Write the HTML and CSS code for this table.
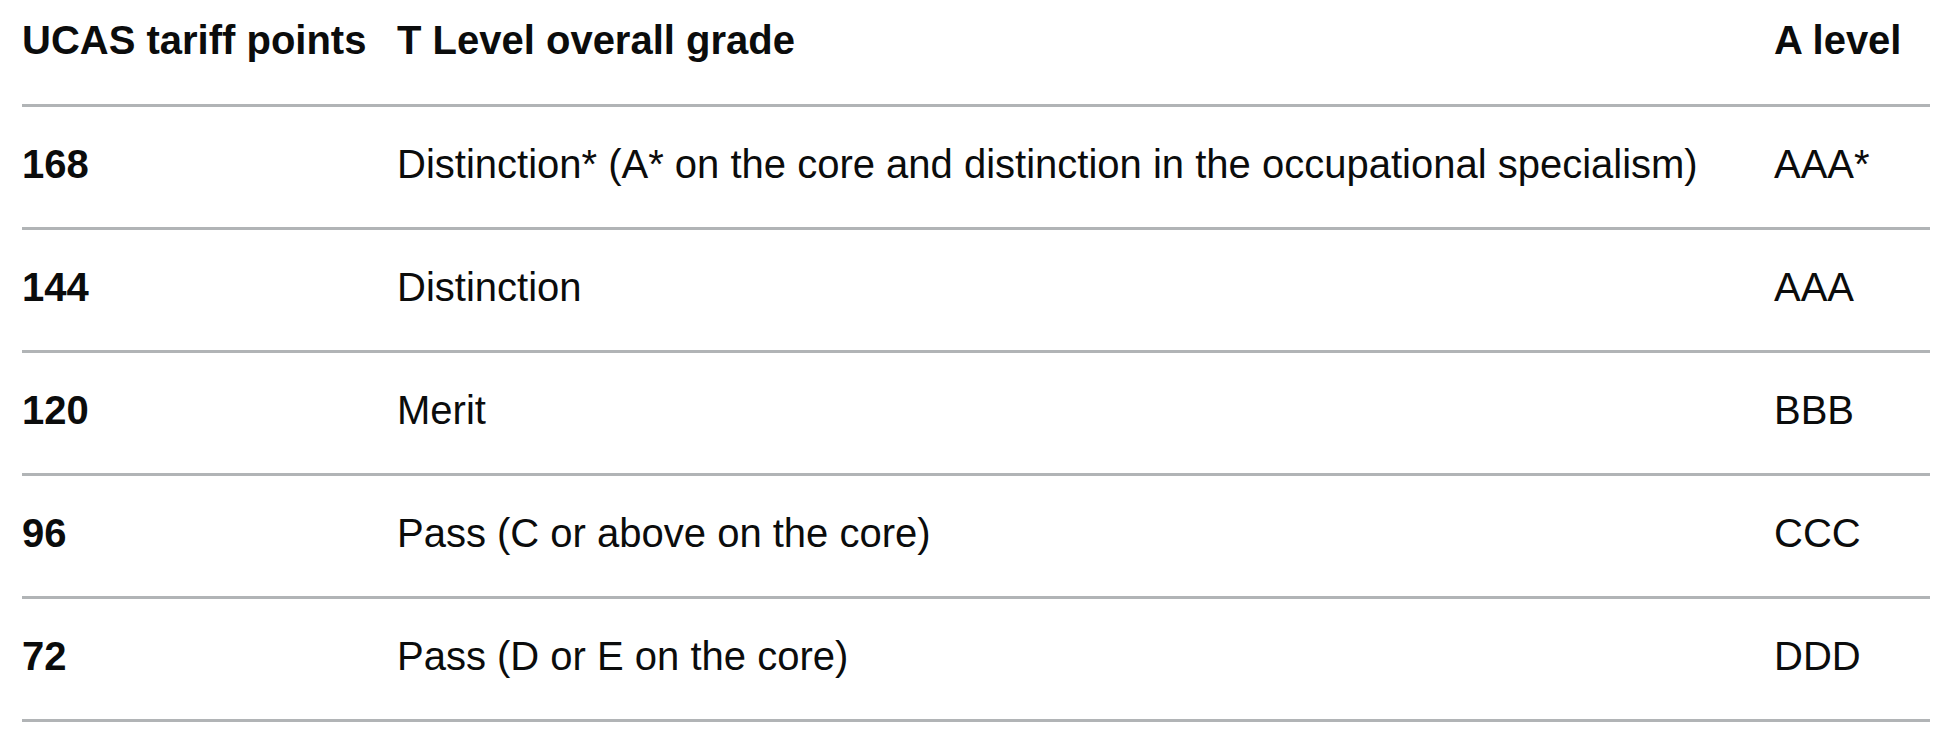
FILE: index.html
```html
<!DOCTYPE html>
<html lang="en">
<head>
<meta charset="utf-8">
<title>T Level UCAS tariff points</title>
<link rel="stylesheet" href="styles.css">
</head>
<body>
<table class="table">
  <colgroup>
    <col class="col-points">
    <col class="col-grade">
    <col class="col-alevel">
  </colgroup>
  <thead>
    <tr>
      <th class="head-cell" scope="col">UCAS tariff points</th>
      <th class="head-cell" scope="col">T Level overall grade</th>
      <th class="head-cell" scope="col">A level</th>
    </tr>
  </thead>
  <tbody>
    <tr>
      <th class="cell cell-strong" scope="row">168</th>
      <td class="cell">Distinction* (A* on the core and distinction in the occupational specialism)</td>
      <td class="cell">AAA*</td>
    </tr>
    <tr>
      <th class="cell cell-strong" scope="row">144</th>
      <td class="cell">Distinction</td>
      <td class="cell">AAA</td>
    </tr>
    <tr>
      <th class="cell cell-strong" scope="row">120</th>
      <td class="cell">Merit</td>
      <td class="cell">BBB</td>
    </tr>
    <tr>
      <th class="cell cell-strong" scope="row">96</th>
      <td class="cell">Pass (C or above on the core)</td>
      <td class="cell">CCC</td>
    </tr>
    <tr>
      <th class="cell cell-strong" scope="row">72</th>
      <td class="cell">Pass (D or E on the core)</td>
      <td class="cell">DDD</td>
    </tr>
  </tbody>
</table>
</body>
</html>
```
FILE: styles.css
```css
html, body {
  margin: 0;
  padding: 0;
  background: #ffffff;
}

body {
  padding: 0 18px 0 22px;
  font-family: "Liberation Sans", Arial, sans-serif;
  color: #0b0c0c;
}

.table {
  width: 1908px;
  table-layout: fixed;
  border-collapse: collapse;
  border-spacing: 0;
  font-size: 40px;
  line-height: 60px;
}

.col-points { width: 375px; }
.col-grade { width: 1377px; }
.col-alevel { width: 156px; }

.head-cell,
.cell {
  text-align: left;
  vertical-align: top;
  border-bottom: 3px solid #b1b4b6;
  padding-left: 0;
  padding-right: 0;
  white-space: nowrap;
}

.head-cell {
  font-weight: 700;
  padding-top: 10px;
  padding-bottom: 34px;
}

.cell {
  font-weight: 400;
  padding-top: 27px;
  padding-bottom: 33px;
}

.cell-strong {
  font-weight: 700;
}
```
